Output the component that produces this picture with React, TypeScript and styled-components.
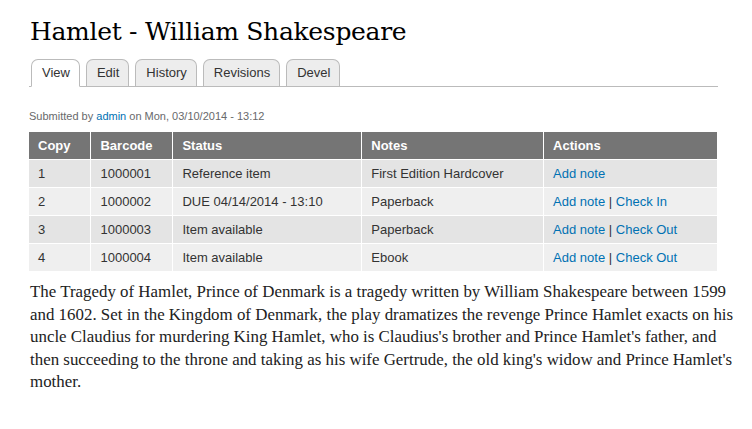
import React from 'react';
import styled, { createGlobalStyle } from 'styled-components';

const GlobalStyle = createGlobalStyle`
  html, body {
    margin: 0;
    padding: 0;
    background: #fff;
  }
  body {
    font-family: "Liberation Serif", Georgia, serif;
    color: #3b3b3b;
  }
`;

const Page = styled.div`
  padding: 14px 20px 0 29px;
  width: 752px;
  box-sizing: border-box;
`;

const Title = styled.h1`
  margin: 0 0 0 1px;
  font-family: "DejaVu Serif", Georgia, serif;
  font-weight: normal;
  font-size: 25px;
  line-height: 36px;
  color: #000;
  letter-spacing: -0.3px;
`;

const Tabs = styled.ul`
  display: flex;
  gap: 6px;
  list-style: none;
  margin: 9px 0 0 0;
  padding: 0 0 0 2px;
  width: 687px;
  border-bottom: 1px solid #bbb;
`;

const Tab = styled.li<{ $active?: boolean }>`
  font-family: "Liberation Sans", Arial, sans-serif;
  font-size: 13px;
  color: #333;
  padding: 0 9px 0 10px;
  height: 26px;
  line-height: 25px;
  border: 1px solid #bbb;
  border-bottom: ${(p) => (p.$active ? '1px solid #fff' : 'none')};
  margin-bottom: ${(p) => (p.$active ? '-1px' : '0')};
  background: ${(p) => (p.$active ? '#fff' : '#ededed')};
  border-radius: 7px 7px 0 0;
`;

const Meta = styled.div`
  font-family: "Liberation Sans", Arial, sans-serif;
  font-size: 11px;
  color: #68696b;
  margin: 22px 0 0 0;
  line-height: 14px;
`;

const Link = styled.a`
  color: #0071b3;
  text-decoration: none;
`;

const Table = styled.table`
  margin-top: 9px;
  width: 689px;
  border-collapse: collapse;
  font-family: "Liberation Sans", Arial, sans-serif;
  font-size: 13px;
`;

const Th = styled.th`
  background: #757575;
  color: #fff;
  font-weight: bold;
  text-align: left;
  height: 27px;
  padding: 0 9px;
  border: 1px solid #fff;
  border-top: none;
  &:first-child { border-left: none; }
`;

const Tr = styled.tr<{ $odd: boolean }>`
  background: ${(p) => (p.$odd ? '#e4e4e4' : '#efefef')};
`;

const Td = styled.td`
  color: #333;
  height: 27px;
  padding: 0 9px;
  border: 1px solid #fff;
  &:first-child { border-left: none; }
`;

const Sep = styled.span`
  color: #333;
`;

const Body = styled.p`
  margin: 9px 0 0 1px;
  font-family: "Liberation Serif", Georgia, serif;
  font-size: 16.9px;
  line-height: 22.5px;
  color: #222;
  width: 712px;
`;

type Row = {
  copy: string;
  barcode: string;
  status: string;
  notes: string;
  action?: string;
};

const rows: Row[] = [
  { copy: '1', barcode: '1000001', status: 'Reference item', notes: 'First Edition Hardcover' },
  { copy: '2', barcode: '1000002', status: 'DUE 04/14/2014 - 13:10', notes: 'Paperback', action: 'Check In' },
  { copy: '3', barcode: '1000003', status: 'Item available', notes: 'Paperback', action: 'Check Out' },
  { copy: '4', barcode: '1000004', status: 'Item available', notes: 'Ebook', action: 'Check Out' },
];

export default function App() {
  return (
    <>
      <GlobalStyle />
      <Page>
        <Title>Hamlet - William Shakespeare</Title>
        <Tabs>
          <Tab $active>View</Tab>
          <Tab>Edit</Tab>
          <Tab>History</Tab>
          <Tab>Revisions</Tab>
          <Tab>Devel</Tab>
        </Tabs>
        <Meta>
          Submitted by <Link href="#">admin</Link> on Mon, 03/10/2014 - 13:12
        </Meta>
        <Table>
          <colgroup>
            <col style={{ width: 62 }} />
            <col style={{ width: 82 }} />
            <col style={{ width: 189 }} />
            <col style={{ width: 182 }} />
            <col style={{ width: 174 }} />
          </colgroup>
          <thead>
            <tr>
              <Th>Copy</Th>
              <Th>Barcode</Th>
              <Th>Status</Th>
              <Th>Notes</Th>
              <Th>Actions</Th>
            </tr>
          </thead>
          <tbody>
            {rows.map((r, i) => (
              <Tr key={r.copy} $odd={i % 2 === 0}>
                <Td>{r.copy}</Td>
                <Td>{r.barcode}</Td>
                <Td>{r.status}</Td>
                <Td>{r.notes}</Td>
                <Td>
                  <Link href="#">Add note</Link>
                  {r.action && (
                    <>
                      {' '}
                      <Sep>|</Sep> <Link href="#">{r.action}</Link>
                    </>
                  )}
                </Td>
              </Tr>
            ))}
          </tbody>
        </Table>
        <Body>
          The Tragedy of Hamlet, Prince of Denmark is a tragedy written by William Shakespeare between 1599
          and 1602. Set in the Kingdom of Denmark, the play dramatizes the revenge Prince Hamlet exacts on his
          uncle Claudius for murdering King Hamlet, who is Claudius's brother and Prince Hamlet's father, and
          then succeeding to the throne and taking as his wife Gertrude, the old king's widow and Prince Hamlet's
          mother.
        </Body>
      </Page>
    </>
  );
}
